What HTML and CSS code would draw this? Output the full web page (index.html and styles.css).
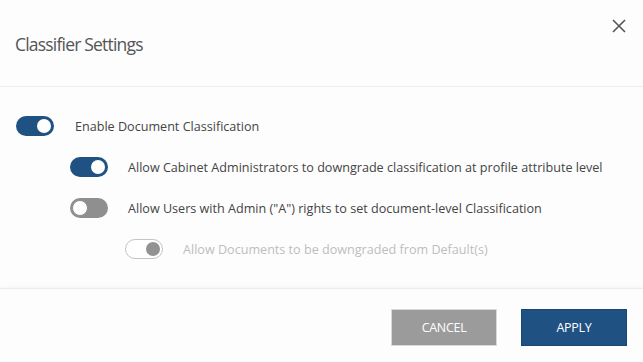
FILE: index.html
```html
<!DOCTYPE html>
<html>
<head>
<meta charset="utf-8">
<link rel="stylesheet" href="styles.css">
</head>
<body>
<div class="dialog">
  <header class="header">
    <h1 class="title">Classifier Settings</h1>
    <button class="close" aria-label="Close">
      <svg width="14" height="14" viewBox="0 0 14 14"><path d="M1 1 L13 13 M13 1 L1 13" stroke="#555" stroke-width="1.6" fill="none"/></svg>
    </button>
  </header>
  <main class="body">
    <div class="row level0">
      <span class="toggle on"><span class="knob"></span></span>
      <span class="label">Enable Document Classification</span>
    </div>
    <div class="row level1">
      <span class="toggle on"><span class="knob"></span></span>
      <span class="label">Allow Cabinet Administrators to downgrade classification at profile attribute level</span>
    </div>
    <div class="row level1">
      <span class="toggle off"><span class="knob"></span></span>
      <span class="label">Allow Users with Admin ("A") rights to set document-level Classification</span>
    </div>
    <div class="row level2">
      <span class="toggle disabled"><span class="knob"></span></span>
      <span class="label muted">Allow Documents to be downgraded from Default(s)</span>
    </div>
  </main>
  <footer class="footer">
    <button class="btn cancel">CANCEL</button>
    <button class="btn apply">APPLY</button>
  </footer>
</div>
</body>
</html>
```

FILE: styles.css
```css
html, body {
  margin: 0;
  padding: 0;
  background: #fdfdfd;
}
body {
  font-family: "Open Sans", "Noto Sans", sans-serif;
  width: 643px;
  height: 362px;
  overflow: hidden;
}
.dialog {
  display: flex;
  flex-direction: column;
  height: 362px;
}
.header {
  position: relative;
  height: 86px;
  border-bottom: 1px solid #ededed;
  display: flex;
  align-items: center;
  padding-left: 15px;
  box-sizing: content-box;
}
.title {
  margin: 0;
  font-size: 17.5px;
  letter-spacing: -0.8px;
  font-weight: 400;
  color: #555;
  padding-top: 1px;
}
.close {
  position: absolute;
  top: 19px;
  right: 17px;
  background: none;
  border: 0;
  padding: 0;
  width: 14px;
  height: 14px;
  display: block;
}
.close svg { display: block; }
.body {
  flex: 1;
  padding-top: 29px;
  display: flex;
  flex-direction: column;
  gap: 21px;
}
.row {
  display: flex;
  align-items: center;
  height: 20px;
}
.level0 { padding-left: 16px; }
.level1 { padding-left: 70px; }
.level2 { padding-left: 125px; }
.label {
  font-size: 12.6px;
  color: #444;
  margin-left: 20px;
  white-space: nowrap;
}
.level0 .label { margin-left: 21px; }
.muted { color: #bdbdbd; }
.toggle {
  position: relative;
  width: 38px;
  height: 20px;
  border-radius: 10px;
  box-sizing: border-box;
  flex: none;
}
.toggle .knob {
  position: absolute;
  top: 3px;
  width: 14px;
  height: 14px;
  border-radius: 50%;
  box-sizing: border-box;
}
.toggle.on { background: #1f5282; }
.toggle.on .knob { right: 3px; background: #fff; }
.toggle.off { background: #8f8f8f; }
.toggle.off .knob { left: 2px; top: 2px; width: 16px; height: 16px; background: #fff; border: 1.5px solid #8f8f8f; }
.toggle.disabled { background: #fff; border: 1.5px solid #c4c4c4; }
.toggle.disabled .knob { right: 2px; top: 1.5px; width: 14px; height: 14px; background: #929292; }
.footer {
  height: 74px;
  border-top: 1px solid #ececec;
  box-shadow: 0 -1px 3px rgba(0,0,0,0.04);
  display: flex;
  justify-content: flex-end;
  align-items: flex-start;
  padding: 20px 16px 0 0;
  gap: 24px;
  box-sizing: border-box;
}
.btn {
  width: 106px;
  height: 37px;
  border: 1px solid #d8d8d8;
  color: #fff;
  font-family: "Open Sans", "Noto Sans", sans-serif;
  font-size: 12.5px;
  letter-spacing: -0.3px;
  padding: 0;
}
.cancel { background: #9b9b9b; }
.apply { background: #1f5282; border-color: #1a4570; }
```
